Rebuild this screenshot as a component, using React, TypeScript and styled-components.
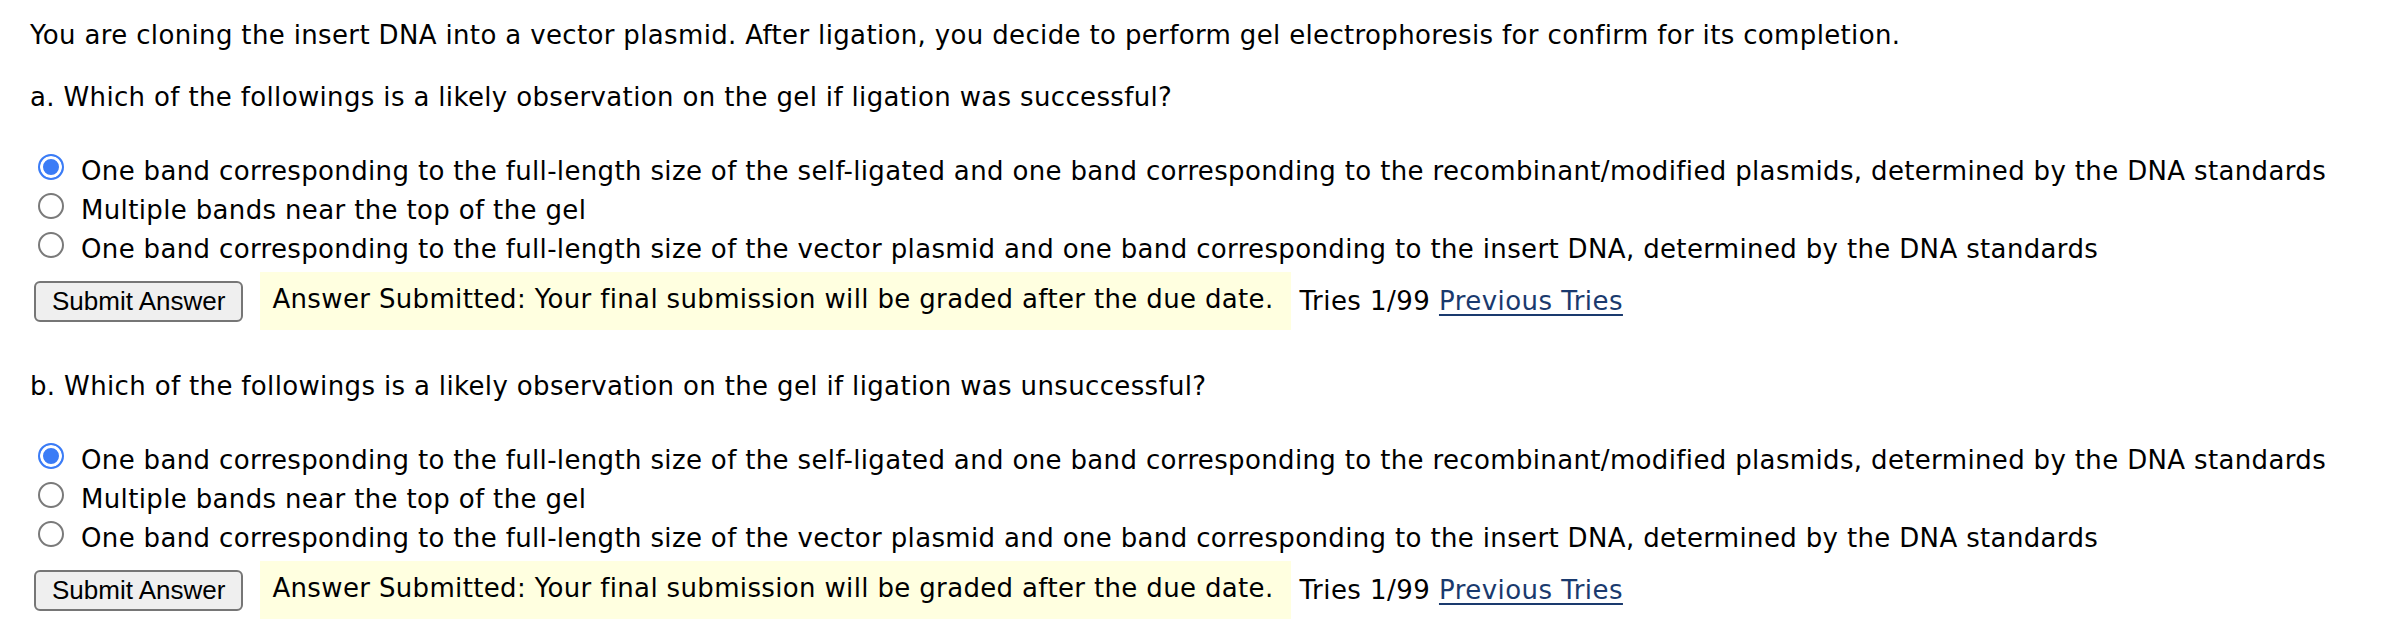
import * as React from "react";
import styled, { createGlobalStyle } from "styled-components";

const GlobalStyle = createGlobalStyle`
  body {
    margin: 0;
    background: #ffffff;
    color: #000000;
    font-family: "DejaVu Sans", Verdana, sans-serif;
  }
`;

const Page = styled.div`
  padding: 16px 0 0 30px;
  font-size: 26px;
  line-height: 39px;
  letter-spacing: 0.35px;
`;

const Intro = styled.p`
  margin: 0;
  white-space: nowrap;
`;

const Part = styled.section<{ first?: boolean }>`
  margin-top: ${props => (props.first ? "22.5px" : "36.5px")};
`;

const Question = styled.p`
  margin: 0 0 35px;
  white-space: nowrap;
`;

const OptionList = styled.div`
  display: flex;
  flex-direction: column;
`;

const OptionRow = styled.label`
  display: flex;
  align-items: center;
  height: 39px;
  white-space: nowrap;
`;

const Radio = styled.span<{ checked?: boolean }>`
  box-sizing: border-box;
  flex: 0 0 auto;
  width: 26px;
  height: 26px;
  margin: 0 17px 8px 8px;
  border-radius: 50%;
  border: 2px solid ${props => (props.checked ? "#3b7cf6" : "#7a7a7a")};
  background: ${props => (props.checked ? "#3b7cf6" : "#ffffff")};
  box-shadow: ${props => (props.checked ? "inset 0 0 0 3px #ffffff" : "none")};
`;

const SubmitRow = styled.div`
  display: flex;
  align-items: center;
  margin-top: 3.5px;
  white-space: nowrap;
`;

const SubmitButton = styled.button`
  box-sizing: border-box;
  height: 41px;
  margin: 0 17px 0 4px;
  padding: 0 16px;
  border: 2px solid #767676;
  border-radius: 6px;
  background: #efefef;
  color: #000000;
  font-family: "Liberation Sans", Arial, sans-serif;
  font-size: 26px;
  line-height: 1;
  letter-spacing: normal;
`;

const Notice = styled.span`
  display: inline-block;
  padding: 8px 17px 11px 12px;
  background: #ffffe0;
`;

const Tries = styled.span`
  margin-left: 9px;
  letter-spacing: 0.45px;
`;

const TriesLink = styled.a`
  color: #1a3a6e;
  text-decoration: underline;
  text-underline-offset: 4px;
`;

const options = [
  "One band corresponding to the full-length size of the self-ligated and one band corresponding to the recombinant/modified plasmids, determined by the DNA standards",
  "Multiple bands near the top of the gel",
  "One band corresponding to the full-length size of the vector plasmid and one band corresponding to the insert DNA, determined by the DNA standards",
];

const parts = [
  "a. Which of the followings is a likely observation on the gel if ligation was successful?",
  "b. Which of the followings is a likely observation on the gel if ligation was unsuccessful?",
];

export default function App() {
  return (
    <Page>
      <GlobalStyle />
      <Intro>
        You are cloning the insert DNA into a vector plasmid. After ligation, you decide to perform gel
        electrophoresis for confirm for its completion.
      </Intro>
      {parts.map((question, i) => (
        <Part key={question} first={i === 0}>
          <Question>{question}</Question>
          <OptionList>
            {options.map((text, j) => (
              <OptionRow key={text}>
                <Radio checked={j === 0} />
                {text}
              </OptionRow>
            ))}
          </OptionList>
          <SubmitRow>
            <SubmitButton type="button">Submit Answer</SubmitButton>
            <Notice>Answer Submitted: Your final submission will be graded after the due date.</Notice>
            <Tries>
              Tries 1/99 <TriesLink href="#">Previous Tries</TriesLink>
            </Tries>
          </SubmitRow>
        </Part>
      ))}
    </Page>
  );
}
